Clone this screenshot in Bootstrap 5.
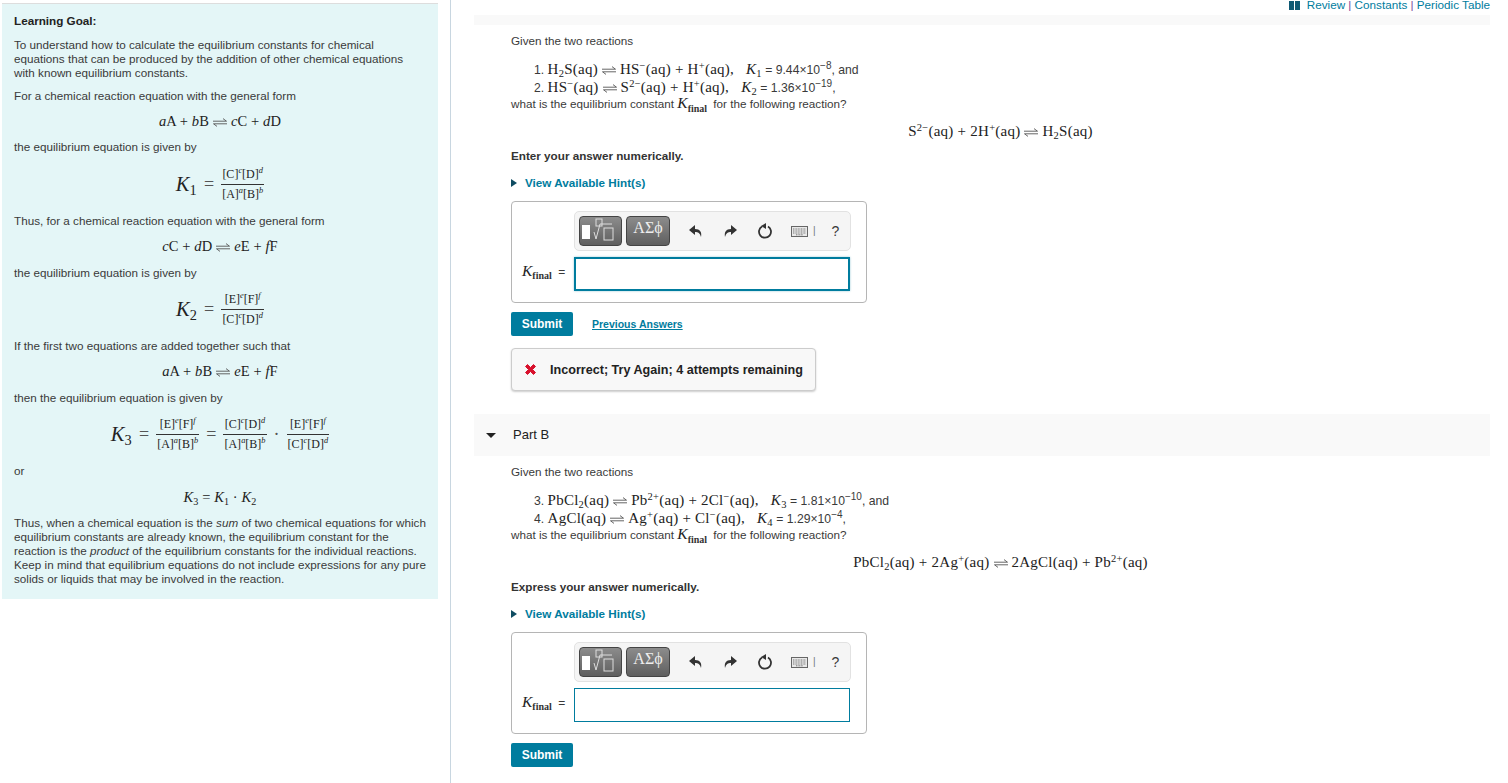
<!DOCTYPE html>
<html lang="en"><head><meta charset="utf-8"><title>Equilibrium constants</title>
<link href="https://cdn.jsdelivr.net/npm/bootstrap@5.3.0/dist/css/bootstrap.min.css" rel="stylesheet">
<style>
html,body{height:783px;overflow:hidden;background:#fff}
body{font:11.7px/14px "Liberation Sans",Arial,sans-serif;color:#3a3a3a;width:1508px}
.lcol{width:451px;height:783px;border-right:1px solid #c8d6e0;flex:none}
.goal{background:#e4f6f7;border-top:1px solid #ddd;margin:3px 12px 0 2px;padding:10px 6px 13px 12px;width:436px;row-gap:9px}
.goal>div{white-space:nowrap}
.goal b{color:#222;font-weight:bold}
.goal>.gl{margin-bottom:1px}
.goal>.up{margin-top:-1px}
.goal>.first{margin-top:3px}
.goal>.orx{margin-top:1px}
.mth{font-family:"Liberation Serif","Times New Roman",serif;color:#222;white-space:nowrap;font-size:14.5px;line-height:20px;letter-spacing:.1px}
.mth i{font-style:italic}
.ce{text-align:center;height:20px;padding-right:6px;line-height:18px}
.fx{height:36px;margin:2px 6px 3px 0;display:flex;justify-content:center;align-items:center;gap:7px}
.kk{font-size:20.5px;font-style:italic}
.kk sub{font-style:normal;font-size:13px;bottom:-.3em}
.sy{font-size:18px;color:#555}
.fr{display:inline-flex;flex-direction:column;text-align:center;font-size:12px;line-height:17px;letter-spacing:0;padding:0}
.fr>span{padding:0 1px}
.fr>span:first-child{border-bottom:1px solid #333;padding-bottom:1px}
.fr>span:last-child{padding-top:1px}
.fr sup{font-size:9.500px;font-style:italic;top:-.5em;line-height:0}
.mth sup{font-size:70%;line-height:0}
.mth sub{font-size:70%;line-height:0}
.hp{width:14px;height:9px;vertical-align:-1px;margin:0 4px}
.rcol{width:1016px;margin-left:23px;flex:none}
.toplinks{height:10px;line-height:10px;color:#007c9e;text-align:right;margin-bottom:5px}
.toplinks .sp{color:#7a4a9a}
.toplinks svg{vertical-align:-1px;margin-right:7px}
.tbar{height:10px;background:#f9f9f9}
.partbody{padding-left:37px}
.ln{height:14px;line-height:14px}
.first-ln{margin-top:9px}
.gap12{height:12px}
.rxn{padding-left:23px;line-height:18px;height:18px;white-space:nowrap;font-size:12.2px}
.rxn .mth{font-size:15px;line-height:18px;letter-spacing:.25px}
.nm{font-family:"Liberation Sans",Arial,sans-serif;font-size:10px;color:#3a3a3a;letter-spacing:0}
.kf{font-family:"Liberation Serif",serif;font-style:italic;font-size:15.5px;color:#222;margin-right:3px}
.kf sub{font-style:normal;font-weight:bold;font-size:10px;bottom:-.35em;line-height:0;color:#333}
.cen{text-align:center;height:20px;margin-top:11px;font-size:15px;letter-spacing:.25px}
.bd2{margin-top:8px}
.hint{color:#007c9e;font-weight:bold;display:flex;align-items:center;gap:8px;margin-top:13px}
.tri{width:0;height:0;border-left:6px solid #0f4c62;border-top:4px solid transparent;border-bottom:4px solid transparent}
.ansbox{width:356px;border:1px solid #b5b5b5;border-radius:4px;padding:9px 16px 9px 62px;height:102px;margin-top:11px}
.tools{width:277px;height:40px;background:#f5f5f5;border:1px solid #e2e2e2;border-radius:5px;display:flex;align-items:center;padding:0 4px}
.tbtn{height:30px;border-radius:4px;border:1px solid #444;background:linear-gradient(#8c8c8c,#5f5f5f);display:flex;align-items:center;justify-content:center;color:#fff;flex:none}
.tbtn.t1{width:43px;margin-right:4px}
.tbtn.t2{width:44px;font:16px/1 "Liberation Serif",serif;padding-bottom:6px;color:#eee}
.ti{flex:none}
.i1{margin-left:19px}.i2{margin-left:20px}.i3{margin-left:20px}.i4{margin-left:18px}
.i5{margin-left:5px;font-size:10px}.i6{margin-left:16px;font-size:14px}
.inrow{display:flex;align-items:center;margin-top:6px;margin-left:-52px}
.inlab{width:52px;white-space:nowrap;font-size:12px;padding-bottom:6px}
.anin{width:277px;height:34px;border:1px solid #007c9e;background:#fff;border-radius:0}
.anin.act{border-width:2px;box-shadow:0 0 2px #007c9e66}
.subrow{margin-top:9px}
.sbtn{background:#007c9e;color:#fff;border:0;border-radius:2px;height:24px;width:62px;font:bold 12px/24px "Liberation Sans",Arial,sans-serif;padding:0;text-align:center}
.sbtn:hover{background:#007c9e;color:#fff}
.prev{color:#007c9e;font-weight:bold;font-size:10.500px;text-decoration:underline;margin-left:19px}
.fb{width:305px;height:43px;margin-top:12px;background:#f8f8f8;border:1px solid #ccc;border-radius:4px;box-shadow:0 1px 2px #0003;display:flex;align-items:center;gap:13px;padding-left:12px;font-size:12.6px;font-weight:bold;color:#222}
.partb{height:42px;background:#f9f9f9;margin-top:23px;display:flex;align-items:center;font-size:13px;color:#222}
.dn{width:0;height:0;border-top:5px solid #222;border-left:5px solid transparent;border-right:5px solid transparent;margin:0 17px 0 12px}
.bd{font-weight:bold;color:#333}
.defs{position:absolute;width:0;height:0}
</style></head><body>
<svg class="defs"><defs>
<symbol id="hp" viewBox="0 0 14 9"><path d="M0 3.2H13.5L10 .6M14 5.8H.5L4 8.4" fill="none" stroke="#555" stroke-width=".9"/></symbol>
<symbol id="kb" viewBox="0 0 17 11"><rect x=".5" y=".5" width="16" height="10" fill="#e8e8e8" stroke="#666"/><path d="M2 3h13M2 5h13M2 7h13M5 8.8h7" stroke="#777" stroke-dasharray="1 .6"/></symbol>
<symbol id="tp1" viewBox="0 0 37 26"><rect x="0" y="7" width="8" height="14" fill="#fff"/><rect x="14" y="1" width="6" height="7" fill="none" stroke="#ddd"/><path d="M12 14l2 7 4-15h12" fill="none" stroke="#ddd"/><rect x="22" y="10" width="9" height="12" fill="none" stroke="#ddd"/></symbol>
<symbol id="und" viewBox="0 0 14 14"><path d="M6 1L0 6l6 5V8c3 0 5 1 6 5 1-5-1-8-6-8z" fill="#333"/></symbol>
<symbol id="red" viewBox="0 0 14 14"><path d="M8 1l6 5-6 5V8C5 8 3 9 2 13 1 8 3 5 8 5z" fill="#333"/></symbol>
<symbol id="rst" viewBox="0 0 16 16"><path d="M5 3.500a6 6 0 1 0 6 0" fill="none" stroke="#333" stroke-width="1.800"/><path d="M9 0v6l-5-3z" fill="#333"/></symbol>
</defs></svg>
<div class="d-flex">
<aside class="lcol">
<div class="goal d-flex flex-column">
<div class="gl"><b>Learning Goal:</b></div>
<div>To understand how to calculate the equilibrium constants for chemical<br>equations that can be produced by the addition of other chemical equations<br>with known equilibrium constants.</div>
<div>For a chemical reaction equation with the general form</div>
<div class="mth ce"><i>a</i>A + <i>b</i>B<svg class="hp"><use href="#hp"/></svg><i>c</i>C + <i>d</i>D</div>
<div class="up">the equilibrium equation is given by</div>
<div class="mth fx first"><span class="kk">K<sub>1</sub></span><span class="sy">=</span><span class="fr"><span>[C]<sup>c</sup>[D]<sup>d</sup></span><span>[A]<sup>a</sup>[B]<sup>b</sup></span></span></div>
<div>Thus, for a chemical reaction equation with the general form</div>
<div class="mth ce"><i>c</i>C + <i>d</i>D<svg class="hp"><use href="#hp"/></svg><i>e</i>E + <i>f</i>F</div>
<div>the equilibrium equation is given by</div>
<div class="mth fx"><span class="kk">K<sub>2</sub></span><span class="sy">=</span><span class="fr"><span>[E]<sup>e</sup>[F]<sup>f</sup></span><span>[C]<sup>c</sup>[D]<sup>d</sup></span></span></div>
<div>If the first two equations are added together such that</div>
<div class="mth ce"><i>a</i>A + <i>b</i>B<svg class="hp"><use href="#hp"/></svg><i>e</i>E + <i>f</i>F</div>
<div>then the equilibrium equation is given by</div>
<div class="mth fx"><span class="kk">K<sub>3</sub></span><span class="sy">=</span><span class="fr"><span>[E]<sup>e</sup>[F]<sup>f</sup></span><span>[A]<sup>a</sup>[B]<sup>b</sup></span></span><span class="sy">=</span><span class="fr"><span>[C]<sup>c</sup>[D]<sup>d</sup></span><span>[A]<sup>a</sup>[B]<sup>b</sup></span></span><span class="sy">·</span><span class="fr"><span>[E]<sup>e</sup>[F]<sup>f</sup></span><span>[C]<sup>c</sup>[D]<sup>d</sup></span></span></div>
<div>or</div>
<div class="mth ce orx"><i>K</i><sub>3</sub> = <i>K</i><sub>1</sub> · <i>K</i><sub>2</sub></div>
<div class="up">Thus, when a chemical equation is the <i>sum</i> of two chemical equations for which<br>equilibrium constants are already known, the equilibrium constant for the<br>reaction is the <i>product</i> of the equilibrium constants for the individual reactions.<br>Keep in mind that equilibrium equations do not include expressions for any pure<br>solids or liquids that may be involved in the reaction.</div>
</div>
</aside>
<main class="rcol">
<div class="toplinks"><svg width="11" height="9" viewBox="0 0 11 9"><path d="M0 0h5v9H0zM6 0h5v9H6z" fill="#0f5a74"/></svg>Review <span class="sp">|</span> Constants <span class="sp">|</span> Periodic Table</div>
<div class="tbar"></div>
<div class="partbody">
<div class="ln first-ln">Given the two reactions</div>
<div class="gap12"></div>
<div class="rxn">1. <span class="mth">H<sub>2</sub>S(aq)<svg class="hp"><use href="#hp"/></svg>HS<sup>−</sup>(aq) + H<sup>+</sup>(aq),&nbsp;&nbsp; <i>K</i><sub>1</sub></span> = 9.44×10<sup class="nm">−8</sup>, and</div>
<div class="rxn">2. <span class="mth">HS<sup>−</sup>(aq)<svg class="hp"><use href="#hp"/></svg>S<sup>2−</sup>(aq) + H<sup>+</sup>(aq),&nbsp;&nbsp; <i>K</i><sub>2</sub></span> = 1.36×10<sup class="nm">−19</sup>,</div>
<div class="ln">what is the equilibrium constant <span class="kf">K<sub>final</sub></span> for the following reaction?</div>
<div class="mth cen">S<sup>2−</sup>(aq) + 2H<sup>+</sup>(aq)<svg class="hp"><use href="#hp"/></svg>H<sub>2</sub>S(aq)</div>
<div class="ln bd bd2">Enter your answer numerically.</div>
<div class="ln hint"><span class="tri"></span>View Available Hint(s)</div>
<div class="ansbox">
<div class="tools"><span class="tbtn t1"><svg width="37" height="26"><use href="#tp1"/></svg></span><span class="tbtn t2">ΑΣϕ</span>
<svg class="ti i1" width="14" height="14"><use href="#und"/></svg><svg class="ti i2" width="14" height="14"><use href="#red"/></svg><svg class="ti i3" width="16" height="16"><use href="#rst"/></svg><svg class="ti i4" width="17" height="11"><use href="#kb"/></svg><span class="ti i5 text-secondary">|</span><span class="ti i6">?</span></div>
<div class="inrow"><span class="inlab"><span class="kf">K<sub>final</sub></span> =</span><div class="anin act"></div></div>
</div>
<div class="d-flex align-items-center subrow"><button class="btn sbtn">Submit</button><a class="prev" href="#">Previous Answers</a></div>
<div class="fb"><svg width="13" height="13" viewBox="0 0 13 13"><path d="M1.500 3.500L3.500 1.500 6.500 4.500 9.500 1.500 11.500 3.500 8.500 6.500 11.500 9.500 9.500 11.500 6.500 8.500 3.500 11.500 1.500 9.500 4.500 6.500z" fill="#d8112d" stroke="#d8112d"/></svg>Incorrect; Try Again; 4 attempts remaining</div>
</div>
<div class="partb"><span class="dn"></span>Part B</div>
<div class="partbody">
<div class="ln first-ln">Given the two reactions</div>
<div class="gap12"></div>
<div class="rxn">3. <span class="mth">PbCl<sub>2</sub>(aq)<svg class="hp"><use href="#hp"/></svg>Pb<sup>2+</sup>(aq) + 2Cl<sup>−</sup>(aq),&nbsp;&nbsp; <i>K</i><sub>3</sub></span> = 1.81×10<sup class="nm">−10</sup>, and</div>
<div class="rxn">4. <span class="mth">AgCl(aq)<svg class="hp"><use href="#hp"/></svg>Ag<sup>+</sup>(aq) + Cl<sup>−</sup>(aq),&nbsp;&nbsp; <i>K</i><sub>4</sub></span> = 1.29×10<sup class="nm">−4</sup>,</div>
<div class="ln">what is the equilibrium constant <span class="kf">K<sub>final</sub></span> for the following reaction?</div>
<div class="mth cen">PbCl<sub>2</sub>(aq) + 2Ag<sup>+</sup>(aq)<svg class="hp"><use href="#hp"/></svg>2AgCl(aq) + Pb<sup>2+</sup>(aq)</div>
<div class="ln bd bd2">Express your answer numerically.</div>
<div class="ln hint"><span class="tri"></span>View Available Hint(s)</div>
<div class="ansbox">
<div class="tools"><span class="tbtn t1"><svg width="37" height="26"><use href="#tp1"/></svg></span><span class="tbtn t2">ΑΣϕ</span>
<svg class="ti i1" width="14" height="14"><use href="#und"/></svg><svg class="ti i2" width="14" height="14"><use href="#red"/></svg><svg class="ti i3" width="16" height="16"><use href="#rst"/></svg><svg class="ti i4" width="17" height="11"><use href="#kb"/></svg><span class="ti i5 text-secondary">|</span><span class="ti i6">?</span></div>
<div class="inrow"><span class="inlab"><span class="kf">K<sub>final</sub></span> =</span><div class="anin"></div></div>
</div>
<div class="d-flex align-items-center subrow"><button class="btn sbtn">Submit</button></div>
</div>
</main>
</div>
</body></html>
